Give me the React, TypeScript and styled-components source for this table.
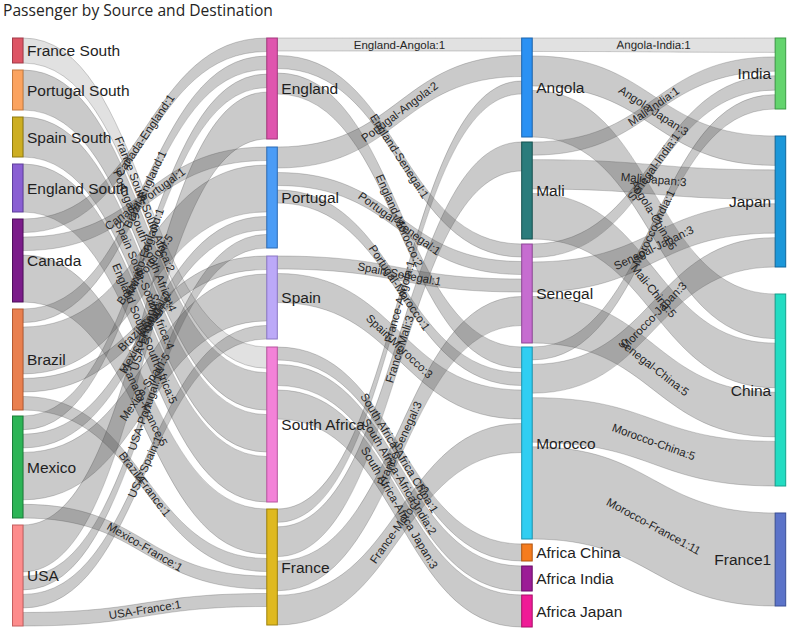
import React from "react";
import styled, { createGlobalStyle } from "styled-components";

const GlobalStyle = createGlobalStyle`
  html, body { margin: 0; padding: 0; background: #ffffff; }
  body { font-family: "Liberation Sans", Arial, sans-serif; }
`;

const Page = styled.div`
  width: 800px;
  height: 637px;
  display: flex;
  flex-direction: column;
  overflow: hidden;
  background: #ffffff;
`;

const Title = styled.div`
  font-family: "Open Sans", "Liberation Sans", sans-serif;
  font-size: 15.6px;
  line-height: 21px;
  height: 21px;
  color: #252423;
  padding-left: 3px;
  white-space: nowrap;
  flex: none;
`;

const Chart = styled.svg`
  display: block;
  width: 800px;
  height: 616px;
  flex: none;
`;

const Ribbon = styled.path<{ $light?: boolean }>`
  fill: ${(p) => (p.$light ? "rgba(80,80,80,0.17)" : "rgba(80,80,80,0.3)")};
  stroke: rgba(70, 70, 70, 0.32);
  stroke-width: 0.8;
`;

const NodeBar = styled.rect<{ $fill: string; $stroke: string }>`
  fill: ${(p) => p.$fill};
  stroke: ${(p) => p.$stroke};
  stroke-width: 1;
`;

const NodeLabel = styled.text`
  font-family: "Liberation Sans", Arial, sans-serif;
  font-size: 15.5px;
  fill: #1f1f1f;
`;

const LinkLabel = styled.text`
  font-family: "Liberation Sans", Arial, sans-serif;
  font-size: 11.5px;
  fill: #262626;
`;

type NodeDef = {
  id: string;
  label: string;
  col: number;
  y0: number;
  y1: number;
  fill: string;
  stroke: string;
};

type LinkDef = {
  s: string;
  t: string;
  v: number;
  light?: boolean;
};

const COL_X = [12.5, 266.8, 521.7, 775.2];
const NODE_W = 10.5;

const NODES: NodeDef[] = [
  { id: "FS", label: "France South", col: 0, y0: 38, y1: 63, fill: "#dd5565", stroke: "#a33a48" },
  { id: "PS", label: "Portugal South", col: 0, y0: 70, y1: 110, fill: "#fba35f", stroke: "#c47a3f" },
  { id: "SS", label: "Spain South", col: 0, y0: 117, y1: 157, fill: "#cdae22", stroke: "#8f7a10" },
  { id: "ES", label: "England South", col: 0, y0: 164, y1: 212, fill: "#8a5fd3", stroke: "#5e3e9c" },
  { id: "CA", label: "Canada", col: 0, y0: 219, y1: 302, fill: "#7b1c8a", stroke: "#4e0e5a" },
  { id: "BR", label: "Brazil", col: 0, y0: 309, y1: 410, fill: "#e9804f", stroke: "#b45a32" },
  { id: "MX", label: "Mexico", col: 0, y0: 416, y1: 518, fill: "#2db456", stroke: "#1b7c38" },
  { id: "US", label: "USA", col: 0, y0: 525, y1: 626, fill: "#fd8c8c", stroke: "#c45f5f" },

  { id: "EN", label: "England", col: 1, y0: 38, y1: 139, fill: "#df55ae", stroke: "#a3367c" },
  { id: "PT", label: "Portugal", col: 1, y0: 147, y1: 248, fill: "#4b9cf6", stroke: "#2c6bb4" },
  { id: "SP", label: "Spain", col: 1, y0: 256, y1: 339, fill: "#bca9f8", stroke: "#8a76c4" },
  { id: "SA", label: "South Africa", col: 1, y0: 347, y1: 502, fill: "#f382d8", stroke: "#b7559f" },
  { id: "FR", label: "France", col: 1, y0: 509, y1: 625, fill: "#dfb920", stroke: "#9e820d" },

  { id: "AO", label: "Angola", col: 2, y0: 38, y1: 137, fill: "#2b91f3", stroke: "#1b64ae" },
  { id: "ML", label: "Mali", col: 2, y0: 142, y1: 239, fill: "#2b7c7c", stroke: "#14504f" },
  { id: "SN", label: "Senegal", col: 2, y0: 244, y1: 343, fill: "#c66dd0", stroke: "#8e4696" },
  { id: "MA", label: "Morocco", col: 2, y0: 347, y1: 539, fill: "#30cef2", stroke: "#1c94b0" },
  { id: "AC", label: "Africa China", col: 2, y0: 544, y1: 561, fill: "#f57c1e", stroke: "#b05510" },
  { id: "AI", label: "Africa India", col: 2, y0: 566, y1: 591, fill: "#9b1d96", stroke: "#6a0d66" },
  { id: "AJ", label: "Africa Japan", col: 2, y0: 595, y1: 627, fill: "#ef1b96", stroke: "#a80f68" },

  { id: "IN", label: "India", col: 3, y0: 38, y1: 109, fill: "#63d46d", stroke: "#3b9a45" },
  { id: "JP", label: "Japan", col: 3, y0: 136, y1: 267, fill: "#1b97d9", stroke: "#10679c" },
  { id: "CN", label: "China", col: 3, y0: 294, y1: 486, fill: "#22dcc2", stroke: "#14a08c" },
  { id: "F1", label: "France1", col: 3, y0: 513, y1: 606, fill: "#5b73c9", stroke: "#3a4f95" },
];

const LINKS: LinkDef[] = [
  { s: "FS", t: "SA", v: 2, light: true },
  { s: "PS", t: "SA", v: 4 },
  { s: "SS", t: "SA", v: 4 },
  { s: "ES", t: "SA", v: 5 },
  { s: "CA", t: "EN", v: 1 },
  { s: "CA", t: "PT", v: 1 },
  { s: "CA", t: "FR", v: 5 },
  { s: "BR", t: "EN", v: 1 },
  { s: "BR", t: "PT", v: 5 },
  { s: "BR", t: "SP", v: 1 },
  { s: "BR", t: "FR", v: 1 },
  { s: "MX", t: "EN", v: 1 },
  { s: "MX", t: "PT", v: 1 },
  { s: "MX", t: "SP", v: 5 },
  { s: "MX", t: "FR", v: 1 },
  { s: "US", t: "EN", v: 5 },
  { s: "US", t: "PT", v: 1 },
  { s: "US", t: "SP", v: 1 },
  { s: "US", t: "FR", v: 1 },

  { s: "EN", t: "AO", v: 1, light: true },
  { s: "EN", t: "SN", v: 1 },
  { s: "EN", t: "MA", v: 2 },
  { s: "PT", t: "AO", v: 2 },
  { s: "PT", t: "SN", v: 1 },
  { s: "PT", t: "MA", v: 1 },
  { s: "SP", t: "SN", v: 1 },
  { s: "SP", t: "MA", v: 3 },
  { s: "SA", t: "AC", v: 1 },
  { s: "SA", t: "AI", v: 2 },
  { s: "SA", t: "AJ", v: 3 },
  { s: "FR", t: "AO", v: 1 },
  { s: "FR", t: "ML", v: 3 },
  { s: "FR", t: "SN", v: 3 },
  { s: "FR", t: "MA", v: 3 },

  { s: "AO", t: "IN", v: 1, light: true },
  { s: "AO", t: "JP", v: 3 },
  { s: "AO", t: "CN", v: 5 },
  { s: "ML", t: "IN", v: 1 },
  { s: "ML", t: "JP", v: 3 },
  { s: "ML", t: "CN", v: 5 },
  { s: "SN", t: "IN", v: 1 },
  { s: "SN", t: "JP", v: 3 },
  { s: "SN", t: "CN", v: 5 },
  { s: "MA", t: "IN", v: 1 },
  { s: "MA", t: "JP", v: 3 },
  { s: "MA", t: "CN", v: 5 },
  { s: "MA", t: "F1", v: 11 },
];

type Band = { a: number; b: number };
type LaidLink = LinkDef & { src: Band; dst: Band; x0: number; x1: number; text: string };

const nodeById: Record<string, NodeDef> = {};
NODES.forEach((n) => {
  nodeById[n.id] = n;
});

const thick = (v: number) => 5 + 8 * v;
const GAP = 4.5;

function stack(node: NodeDef, list: LinkDef[]): Band[] {
  const H = node.y1 - node.y0;
  const ts = list.map((l) => thick(l.v));
  const n = ts.length;
  const sum = ts.reduce((a, b) => a + b, 0);
  const natural = sum + GAP * (n - 1);
  let scale = 1;
  if (n === 1 && natural >= 0.7 * H) scale = H / ts[0];
  else if (n > 1 && natural >= 0.9 * H) scale = (H - GAP * (n - 1)) / sum;
  const out: Band[] = [];
  let y = node.y0;
  ts.forEach((t) => {
    const h = t * scale;
    out.push({ a: y, b: y + h });
    y += h + GAP;
  });
  return out;
}

function layout(): LaidLink[] {
  const srcBand = new Map<LinkDef, Band>();
  const dstBand = new Map<LinkDef, Band>();
  NODES.forEach((node) => {
    const outs = LINKS.filter((l) => l.s === node.id).sort(
      (p, q) => nodeById[p.t].y0 - nodeById[q.t].y0
    );
    const ins = LINKS.filter((l) => l.t === node.id).sort(
      (p, q) => nodeById[p.s].y0 - nodeById[q.s].y0
    );
    if (outs.length) stack(node, outs).forEach((b, i) => srcBand.set(outs[i], b));
    if (ins.length) stack(node, ins).forEach((b, i) => dstBand.set(ins[i], b));
  });
  return LINKS.map((l) => {
    const sn = nodeById[l.s];
    const tn = nodeById[l.t];
    return {
      ...l,
      src: srcBand.get(l) as Band,
      dst: dstBand.get(l) as Band,
      x0: COL_X[sn.col] + NODE_W,
      x1: COL_X[tn.col],
      text: `${sn.label}-${tn.label}:${l.v}`,
    };
  });
}

const LAID = layout();

function ribbonPath(l: LaidLink): string {
  const xm = (l.x0 + l.x1) / 2;
  return [
    `M${l.x0},${l.src.a}`,
    `C${xm},${l.src.a} ${xm},${l.dst.a} ${l.x1},${l.dst.a}`,
    `L${l.x1},${l.dst.b}`,
    `C${xm},${l.dst.b} ${xm},${l.src.b} ${l.x0},${l.src.b}`,
    "Z",
  ].join(" ");
}

function labelPlacement(l: LaidLink) {
  const sc = (l.src.a + l.src.b) / 2;
  const tc = (l.dst.a + l.dst.b) / 2;
  const x = (l.x0 + l.x1) / 2;
  const y = (sc + tc) / 2;
  const ang = (Math.atan2(2 * (tc - sc), l.x1 - l.x0) * 180) / Math.PI;
  return { x, y, ang };
}

const Sankey: React.FC = () => (
  <Chart viewBox="0 21 800 616" xmlns="http://www.w3.org/2000/svg">
    <g>
      {LAID.map((l) => (
        <Ribbon key={`r-${l.s}-${l.t}`} d={ribbonPath(l)} $light={l.light} />
      ))}
    </g>
    <g>
      {LAID.map((l) => {
        const p = labelPlacement(l);
        return (
          <LinkLabel
            key={`t-${l.s}-${l.t}`}
            x={p.x}
            y={p.y}
            textAnchor="middle"
            dominantBaseline="central"
            transform={`rotate(${p.ang.toFixed(2)} ${p.x} ${p.y})`}
          >
            {l.text}
          </LinkLabel>
        );
      })}
    </g>
    <g>
      {NODES.map((n) => (
        <NodeBar
          key={`n-${n.id}`}
          x={COL_X[n.col]}
          y={n.y0}
          width={NODE_W}
          height={n.y1 - n.y0}
          $fill={n.fill}
          $stroke={n.stroke}
        />
      ))}
    </g>
    <g>
      {NODES.map((n) => {
        const right = n.col === 3;
        const x = right ? COL_X[n.col] - 4 : COL_X[n.col] + NODE_W + 4;
        return (
          <NodeLabel
            key={`l-${n.id}`}
            x={x}
            y={(n.y0 + n.y1) / 2}
            textAnchor={right ? "end" : "start"}
            dominantBaseline="central"
          >
            {n.label}
          </NodeLabel>
        );
      })}
    </g>
  </Chart>
);

export default function App() {
  return (
    <>
      <GlobalStyle />
      <Page>
        <Title>Passenger by Source and Destination</Title>
        <Sankey />
      </Page>
    </>
  );
}
